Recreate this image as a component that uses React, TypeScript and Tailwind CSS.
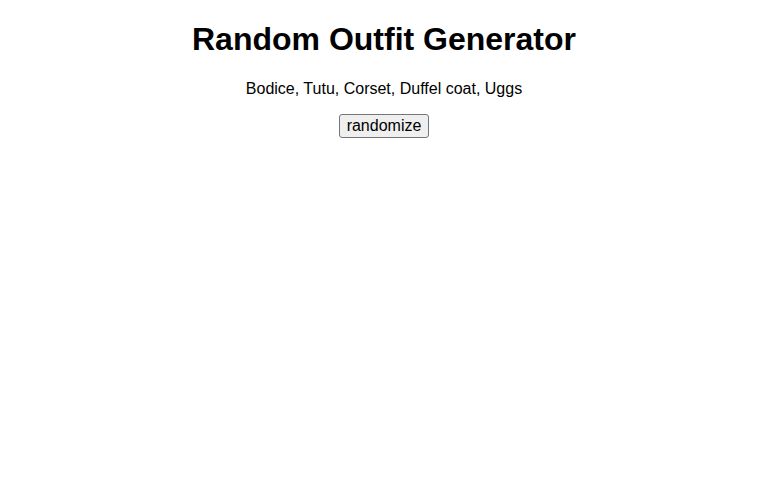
export default function App() {
  const outfit = ['Bodice', 'Tutu', 'Corset', 'Duffel coat', 'Uggs'];

  return (
    <div className="text-center text-black bg-white min-h-screen" style={{ fontFamily: '"Liberation Sans", Arial, sans-serif' }}>
      <h1 className="text-[32px] leading-[37px] font-bold pt-[21px] mb-[22px]">Random Outfit Generator</h1>
      <p className="text-base leading-[18px] mb-4">{outfit.join(', ')}</p>
      <button className="text-base leading-[18px] px-[7px] py-[2px] border border-[#767676] bg-[#efefef] rounded-[3px]">
        randomize
      </button>
    </div>
  );
}
